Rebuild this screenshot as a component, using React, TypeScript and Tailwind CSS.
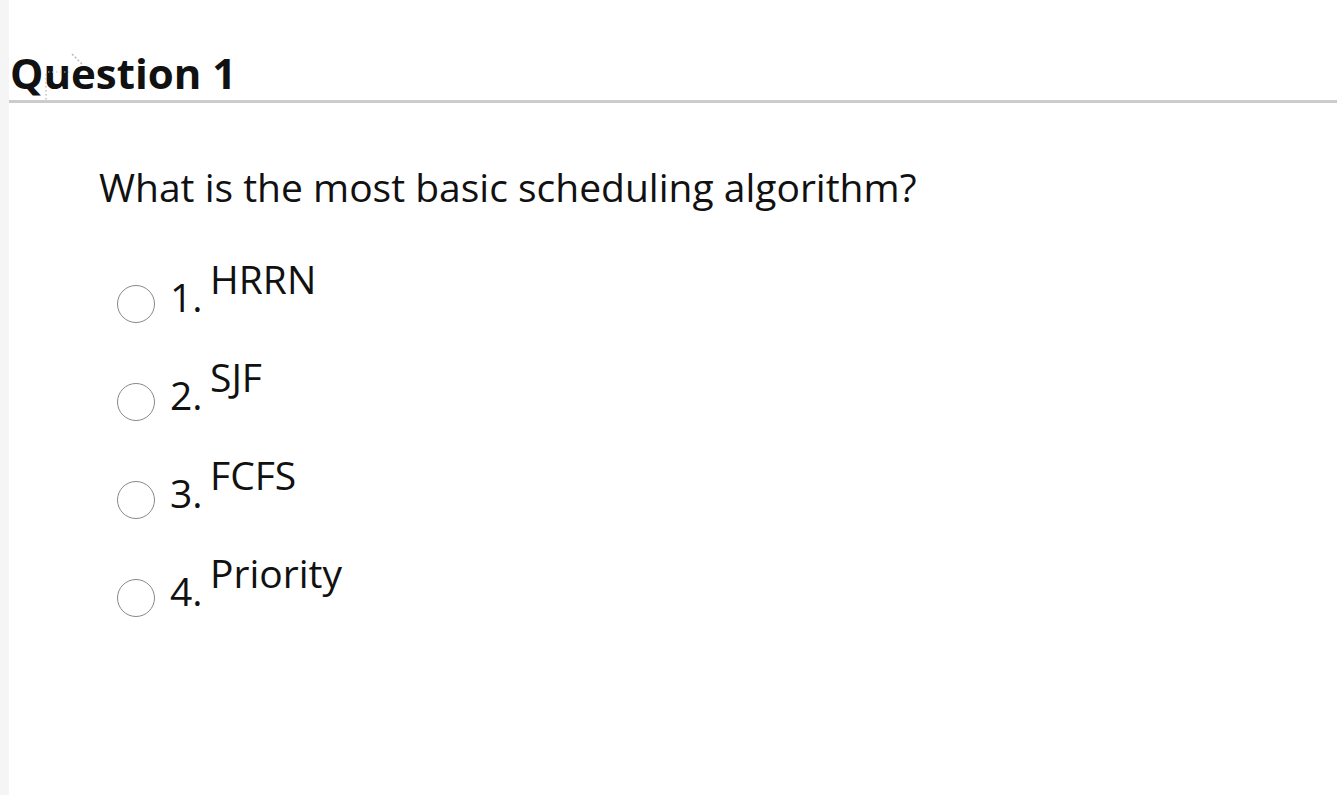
const options = ["HRRN", "SJF", "FCFS", "Priority"];

export default function App() {
  return (
    <div
      className="flex min-h-[795px] bg-white text-[#111]"
      style={{ fontFamily: '"Open Sans", sans-serif' }}
    >
      <div className="w-[9px] shrink-0 bg-[#f5f5f5]" />
      <div className="flex-1">
        <div className="relative pt-[49px] pb-[3px] border-b-[3px] border-[#cccccc]">
          <h1 className="text-[42px] font-bold leading-[48px] pl-[1px]">Question 1</h1>
          <svg className="absolute left-[33px] top-[52px]" width="50" height="52" viewBox="0 0 50 52" fill="none">
            <path d="M30 2 L40 12" stroke="#b8b8b8" strokeWidth="1.5" strokeDasharray="2 2" />
            <path d="M6 20 L28 20" stroke="#c4c4c4" strokeWidth="1" strokeDasharray="1.5 2.5" />
            <path d="M4 22 L4 50" stroke="#b0b0b0" strokeWidth="1.2" strokeDasharray="1.5 2.5" />
          </svg>
        </div>
        <div className="pl-[90px] pt-[58px]">
          <p className="text-[39px] leading-[52px]">What is the most basic scheduling algorithm?</p>
          <div className="mt-[44px] flex flex-col pl-[18px]">
            {options.map((o, i) => (
              <div key={o} className="flex items-start h-[98px]">
                <span className="mt-[28px] w-[38px] h-[38px] rounded-full border border-[#888] bg-white shrink-0" />
                <span className="ml-[15px] w-[40px] mt-[18px] text-[39px] leading-[44px]">{i + 1}.</span>
                <span className="text-[39px] leading-[44px]">{o}</span>
              </div>
            ))}
          </div>
        </div>
      </div>
    </div>
  );
}
